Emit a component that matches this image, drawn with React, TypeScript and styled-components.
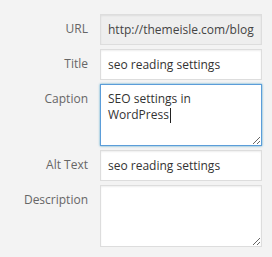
import styled, { createGlobalStyle } from "styled-components";

const GlobalStyle = createGlobalStyle`
  html, body {
    margin: 0;
    padding: 0;
    background: #f3f3f3;
  }
  body {
    font-family: "Open Sans", "Liberation Sans", sans-serif;
  }
`;

const Panel = styled.div`
  display: flex;
  flex-direction: column;
  gap: 4px;
  padding: 14px 10px 10px 0;
  width: 262px;
`;

const Row = styled.label`
  display: grid;
  grid-template-columns: 88px 162px;
  column-gap: 12px;
  align-items: start;
`;

const Label = styled.span`
  text-align: right;
  color: #666;
  font-size: 12px;
  line-height: 16px;
  padding-top: 7px;
`;

const Field = styled.div`
  position: relative;
`;

const fieldBase = `
  box-sizing: border-box;
  width: 162px;
  margin: 0;
  border: 1px solid #ddd;
  background: #fff;
  color: #333;
  font-family: "Open Sans", "Liberation Sans", sans-serif;
  font-size: 12px;
  line-height: 16px;
  padding: 6px 7px;
  outline: none;
  box-shadow: inset 0 1px 2px rgba(0, 0, 0, 0.07);
`;

const TextInput = styled.input<{ $readOnly?: boolean }>`
  ${fieldBase}
  height: 31px;
  background: ${(p) => (p.$readOnly ? "#eee" : "#fff")};
  color: ${(p) => (p.$readOnly ? "#444" : "#333")};
`;

const TextArea = styled.textarea<{ $focused?: boolean }>`
  ${fieldBase}
  display: block;
  height: 62px;
  resize: vertical;
  border-color: ${(p) => (p.$focused ? "#5b9dd9" : "#ddd")};
  box-shadow: ${(p) => (p.$focused ? "0 0 2px rgba(30, 140, 190, 0.8)" : "inset 0 1px 2px rgba(0, 0, 0, 0.07)")};
`;

const Caret = styled.span`
  position: absolute;
  left: 70px;
  top: 24px;
  width: 1px;
  height: 15px;
  background: #222;
`;

export default function App() {
  return (
    <>
      <GlobalStyle />
      <Panel>
        <Row>
          <Label>URL</Label>
          <Field>
            <TextInput $readOnly readOnly value="http://themeisle.com/blog/wp-content/uploads/seo.png" />
          </Field>
        </Row>
        <Row>
          <Label>Title</Label>
          <Field>
            <TextInput readOnly value="seo reading settings" />
          </Field>
        </Row>
        <Row>
          <Label>Caption</Label>
          <Field>
            <TextArea $focused readOnly value="SEO settings in WordPress" />
            <Caret />
          </Field>
        </Row>
        <Row>
          <Label>Alt Text</Label>
          <Field>
            <TextInput readOnly value="seo reading settings" />
          </Field>
        </Row>
        <Row>
          <Label>Description</Label>
          <Field>
            <TextArea readOnly value="" />
          </Field>
        </Row>
      </Panel>
    </>
  );
}
